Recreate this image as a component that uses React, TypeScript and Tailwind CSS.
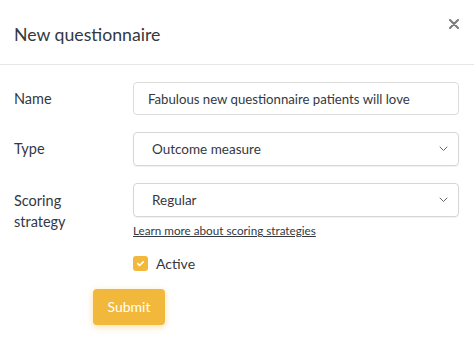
export default function App() {
  return (
    <div className="w-[474px] h-[353px] bg-white text-[#33393f] font-['Lato','Noto_Sans',sans-serif] overflow-hidden">
      <div className="relative h-[65px] border-b border-[#e6e6e6] px-[14px] flex items-center">
        <h2 className="text-[17.7px] pt-[7px]">New questionnaire</h2>
        <button className="absolute right-[15px] top-[19px] text-[#7a7a7a]">
          <svg width="10" height="10" viewBox="0 0 10 10" stroke="currentColor" strokeWidth="2" strokeLinecap="round">
            <path d="M1 1l8 8M9 1l-8 8" />
          </svg>
        </button>
      </div>
      <div className="px-[14px] pt-[17px] text-[14.5px]">
        <div className="flex items-center">
          <label className="w-[119px]">Name</label>
          <input
            defaultValue="Fabulous new questionnaire patients will love"
            className="w-[326px] h-[33px] border border-[#dcdcdc] rounded-[4px] px-[14px] text-[13.2px] outline-none"
          />
        </div>
        <div className="flex items-center mt-[17px]">
          <label className="w-[119px]">Type</label>
          <Select value="Outcome measure" />
        </div>
        <div className="flex mt-[17px]">
          <label className="w-[119px] leading-[21px] pt-[7px]">Scoring<br />strategy</label>
          <div>
            <Select value="Regular" />
            <a href="#" className="block mt-[5px] text-[11.7px] underline text-[#33393f]">Learn more about scoring strategies</a>
          </div>
        </div>
        <div className="flex items-center ml-[119px] mt-[13px] gap-[8px]">
          <span className="w-[15px] h-[15px] rounded-[3px] bg-[#f2b83b] flex items-center justify-center">
            <svg width="9" height="9" viewBox="0 0 10 10" fill="none" stroke="white" strokeWidth="1.8" strokeLinecap="round" strokeLinejoin="round">
              <path d="M2 5.2l2 2 4-4" />
            </svg>
          </span>
          <span className="text-[14px]">Active</span>
        </div>
        <button className="ml-[79px] mt-[15px] w-[72px] h-[36px] rounded-[4px] bg-[#f2b83b] text-white text-[14px] shadow-[0_2px_6px_rgba(242,184,59,0.45)]">
          Submit
        </button>
      </div>
    </div>
  )
}

function Select({ value }: { value: string }) {
  return (
    <div className="w-[326px] h-[34px] border border-[#d6d6d6] rounded-[4px] pl-[18px] pr-[10px] flex items-center justify-between text-[13.5px] shadow-[0_1px_1px_rgba(0,0,0,0.06)]">
      <span>{value}</span>
      <svg width="9" height="6" viewBox="0 0 9 6" fill="none" stroke="#666" strokeWidth="1" strokeLinecap="round">
        <path d="M1 1l3.5 3.5L8 1" />
      </svg>
    </div>
  )
}
